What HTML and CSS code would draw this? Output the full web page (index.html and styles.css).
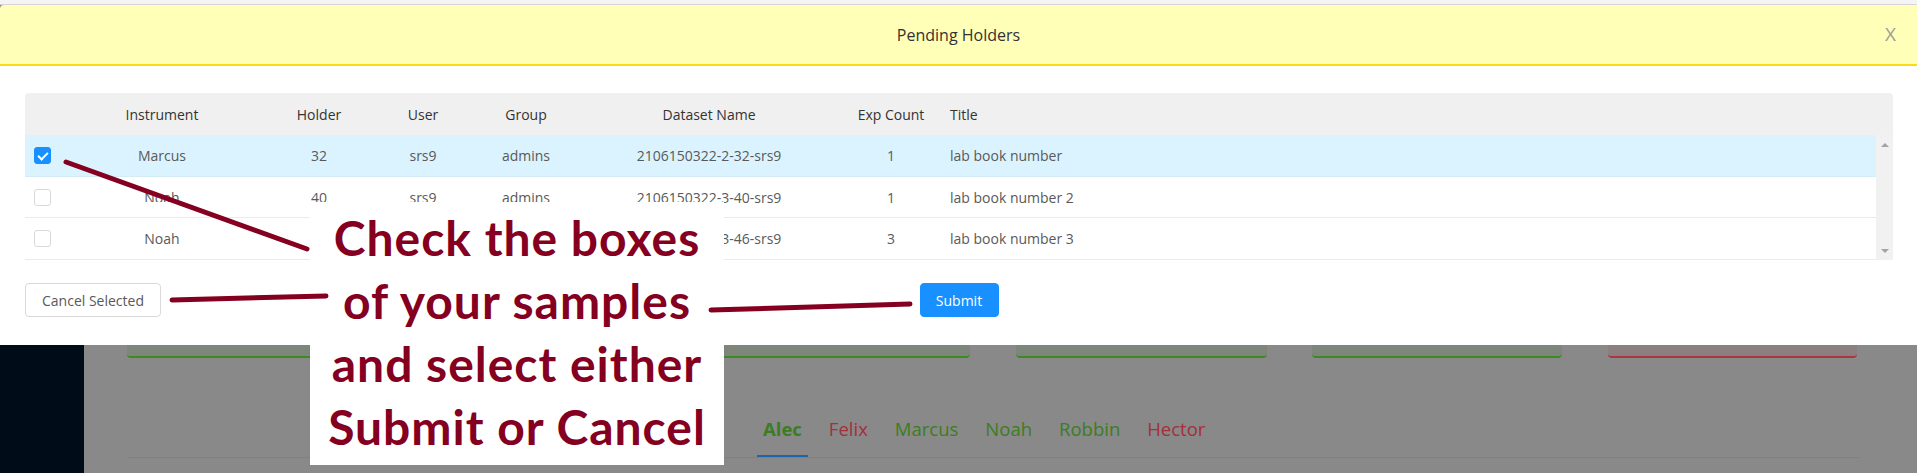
FILE: index.html
```html
<!DOCTYPE html>
<html lang="en">
<head>
<meta charset="utf-8">
<title>Pending Holders</title>
<link rel="stylesheet" href="styles.css">
</head>
<body>
<div class="topbar"></div>
<header class="modal-header">
  <h1 class="title">Pending Holders</h1>
  <span class="close">X</span>
</header>
<section class="modal-body">
  <div class="table">
    <div class="thead cols">
      <div class="cell"></div>
      <div class="cell">Instrument</div>
      <div class="cell">Holder</div>
      <div class="cell">User</div>
      <div class="cell">Group</div>
      <div class="cell">Dataset Name</div>
      <div class="cell">Exp Count</div>
      <div class="cell title-col">Title</div>
    </div>
    <div class="tbody-wrap">
      <div class="tbody">
        <div class="tr cols selected">
          <div class="cell check-cell"><span class="check on"></span></div>
          <div class="cell">Marcus</div>
          <div class="cell">32</div>
          <div class="cell">srs9</div>
          <div class="cell">admins</div>
          <div class="cell">2106150322-2-32-srs9</div>
          <div class="cell">1</div>
          <div class="cell title-col">lab book number</div>
        </div>
        <div class="tr cols">
          <div class="cell check-cell"><span class="check"></span></div>
          <div class="cell">Noah</div>
          <div class="cell">40</div>
          <div class="cell">srs9</div>
          <div class="cell">admins</div>
          <div class="cell">2106150322-3-40-srs9</div>
          <div class="cell">1</div>
          <div class="cell title-col">lab book number 2</div>
        </div>
        <div class="tr cols">
          <div class="cell check-cell"><span class="check"></span></div>
          <div class="cell">Noah</div>
          <div class="cell">46</div>
          <div class="cell">srs9</div>
          <div class="cell">admins</div>
          <div class="cell">2106150322-3-46-srs9</div>
          <div class="cell">3</div>
          <div class="cell title-col">lab book number 3</div>
        </div>
      </div>
      <div class="scrollbar"><span class="arrow up"></span><span class="arrow down"></span></div>
    </div>
  </div>
  <div class="footer">
    <button class="btn">Cancel Selected</button>
    <button class="btn primary">Submit</button>
  </div>
</section>
<div class="page">
  <aside class="sider"></aside>
  <main class="content">
    <div class="cards">
      <div class="card green"></div>
      <div class="card green"></div>
      <div class="card green"></div>
      <div class="card red"></div>
    </div>
    <nav class="tabs">
      <span class="tab active green-t">Alec</span>
      <span class="tab red-t">Felix</span>
      <span class="tab green-t">Marcus</span>
      <span class="tab green-t">Noah</span>
      <span class="tab green-t">Robbin</span>
      <span class="tab red-t">Hector</span>
    </nav>
  </main>
</div>
<div class="note-strip"></div>
<div class="note-box">Check the boxes<br>of your samples<br>and select either<br>Submit or Cancel</div>
<svg class="arrows" viewBox="0 0 1917 473" xmlns="http://www.w3.org/2000/svg">
  <line x1="66" y1="162" x2="307" y2="249"/>
  <line x1="172" y1="300" x2="326" y2="296"/>
  <line x1="711" y1="310" x2="910" y2="304"/>
</svg>
</body>
</html>
```

FILE: styles.css
```css
body {
  margin: 0;
  width: 1917px;
  height: 473px;
  overflow: hidden;
  position: relative;
  background: #898989;
  font-family: "Open Sans", "Noto Sans", sans-serif;
}

.topbar {
  height: 4px;
  background: #f4f4f4;
  border-bottom: 1px solid #d6d6d6;
}

.modal-header {
  height: 59px;
  background: #ffffb8;
  border-bottom: 2px solid #fadb14;
  border-top-left-radius: 4px;
  display: grid;
  grid-template-columns: 1fr auto 1fr;
  align-items: center;
  padding: 0 21px;
}

.title {
  grid-column: 2;
  margin: 0;
  font-size: 16px;
  font-weight: 400;
  color: #333;
}

.close {
  grid-column: 3;
  justify-self: end;
  font-size: 19px;
  line-height: 1;
  color: #9d9d94;
}

.modal-body {
  background: #fff;
  padding: 27px 24px 28px 25px;
}

.cols {
  display: grid;
  grid-template-columns: 35px 204px 110px 98px 108px 258px 106px 1fr;
  align-items: center;
}

.cell {
  text-align: center;
  white-space: nowrap;
}

.cell.title-col {
  text-align: left;
  padding-left: 6px;
}

.thead {
  height: 42px;
  background: #f0f0f0;
  border-radius: 4px 4px 0 0;
  color: #333;
  font-size: 14px;
}

.tbody-wrap {
  display: flex;
}

.tbody {
  flex: 1;
}

.tr {
  height: 41.7px;
  box-sizing: border-box;
  border-bottom: 1px solid #ebebeb;
  color: #595959;
  font-size: 14px;
}

.tr.selected {
  background: #dbf3fe;
  border-bottom-color: #d2ecf8;
}

.check-cell {
  display: flex;
  padding-left: 9px;
}

.check {
  width: 17px;
  height: 17px;
  box-sizing: border-box;
  border: 1px solid #d9d9d9;
  border-radius: 3px;
  background: #fff;
  position: relative;
}

.check.on {
  background: #1890ff;
  border-color: #1890ff;
}

.check.on::after {
  content: "";
  position: absolute;
  left: 5px;
  top: 2px;
  width: 4px;
  height: 8px;
  border: solid #fff;
  border-width: 0 2px 2px 0;
  transform: rotate(45deg);
}

.scrollbar {
  width: 17px;
  background: #f1f1f1;
  display: flex;
  flex-direction: column;
  justify-content: space-between;
  align-items: center;
  padding: 8px 0 7px;
  box-sizing: border-box;
}

.arrow {
  width: 0;
  height: 0;
  border-left: 4px solid transparent;
  border-right: 4px solid transparent;
}

.arrow.up {
  border-bottom: 4px solid #a3a3a3;
}

.arrow.down {
  border-top: 4px solid #a3a3a3;
}

.footer {
  display: grid;
  grid-template-columns: 1fr auto 1fr;
  align-items: center;
  margin-top: 23px;
}

.btn {
  justify-self: start;
  height: 34px;
  padding: 0 16px;
  font-family: inherit;
  font-size: 14px;
  color: #595959;
  background: #fff;
  border: 1px solid #d9d9d9;
  border-radius: 4px;
}

.btn.primary {
  justify-self: center;
  width: 79px;
  padding: 0;
  color: #fff;
  background: #1890ff;
  border-color: #1890ff;
}

.page {
  display: flex;
  height: 128px;
}

.sider {
  width: 84px;
  background: #000c17;
}

.content {
  flex: 1;
  padding: 0 57px 0 43px;
}

.cards {
  display: grid;
  grid-template-columns: 843px 251px 250px 249px;
  column-gap: 45.5px;
}

.card {
  height: 11px;
  border-bottom: 2px solid;
  border-radius: 0 0 4px 4px;
}

.card.green {
  background: #7e867b;
  border-color: #3e8a22;
}

.card.red {
  background: #8b7f7f;
  border-color: #a9363c;
}

.tabs {
  margin-top: 46px;
  display: flex;
  gap: 15px;
  padding-left: 630px;
  border-bottom: 1px solid #808080;
}

.tab {
  padding: 12px 6px 13px;
  font-size: 18.5px;
  line-height: 26px;
  border-bottom: 2px solid transparent;
}

.tab.active {
  font-weight: 700;
  border-bottom-color: #1f64ad;
}

.green-t {
  color: #3b7d22;
}

.red-t {
  color: #a3303a;
}

.note-strip {
  position: absolute;
  left: 120px;
  top: 202px;
  width: 190px;
  height: 15px;
  background: #fff;
}

.note-box {
  position: absolute;
  left: 310px;
  top: 202px;
  width: 414px;
  height: 263px;
  box-sizing: border-box;
  padding-top: 4px;
  background: #fff;
  text-align: center;
  font-family: Lato, "Open Sans", sans-serif;
  font-weight: 700;
  font-size: 48px;
  letter-spacing: 1px;
  line-height: 63px;
  color: #850020;
}

.arrows {
  position: absolute;
  left: 0;
  top: 0;
  width: 1917px;
  height: 473px;
  pointer-events: none;
  stroke: #850020;
  stroke-width: 5;
  stroke-linecap: round;
}
```
